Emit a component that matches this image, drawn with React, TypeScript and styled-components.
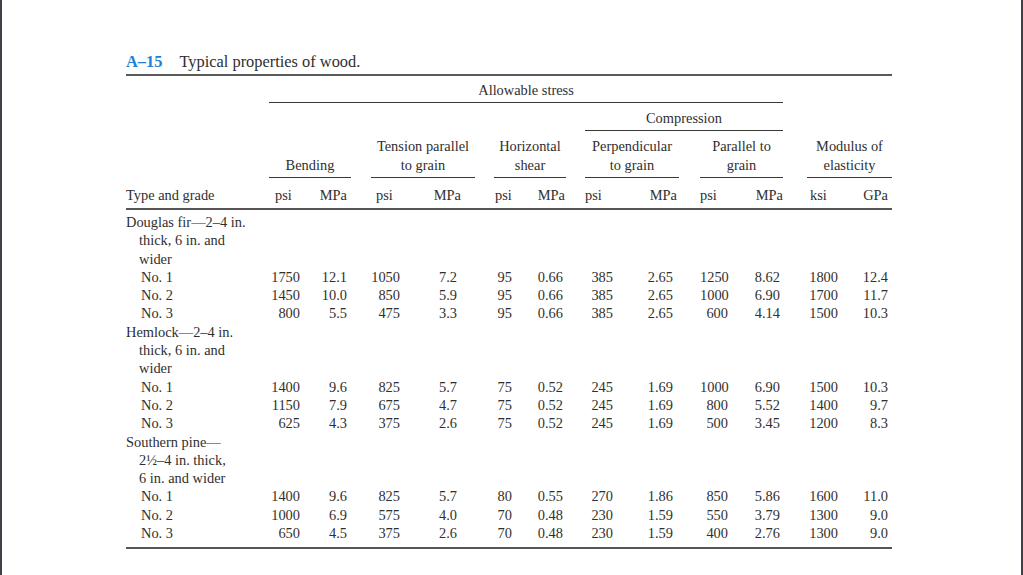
import React from "react";
import styled, { createGlobalStyle } from "styled-components";

const COLS = [143, 41, 41, 20, 52, 52, 19, 36, 36, 19, 47, 47, 21, 41, 42, 24, 42, 43];
const TEMPLATE = COLS.map((c) => `${c}px`).join(" ");

const Global = createGlobalStyle`
  html, body { margin: 0; padding: 0; background: #ffffff; }
  body {
    font-family: "Liberation Serif", "Times New Roman", serif;
    color: #2f2f2f;
    -webkit-font-smoothing: antialiased;
  }
`;

const Page = styled.div`
  box-sizing: border-box;
  width: 1023px;
  height: 575px;
  overflow: hidden;
  background: #ffffff;
  border-left: 2px solid #3d4248;
  border-right: 2px solid #3d4248;
  padding: 52px 0 0 124px;
`;

const Sheet = styled.div`
  width: 766px;
  font-size: 14.4px;
`;

const Caption = styled.div`
  display: flex;
  align-items: baseline;
  gap: 17px;
  font-size: 16.4px;
  line-height: 20px;
  padding-bottom: 2px;
  border-bottom: 2px solid #5a5a5a;
`;

const CaptionNumber = styled.span`
  font-weight: 700;
  color: #1f7fd4;
`;

const CaptionText = styled.span`
  color: #2f2f2f;
`;

const Row = styled.div<{ $pt?: number; $pb?: number; $rule?: boolean; $lh?: number }>`
  display: grid;
  grid-template-columns: ${TEMPLATE};
  padding-top: ${(p) => p.$pt ?? 0}px;
  padding-bottom: ${(p) => p.$pb ?? 0}px;
  line-height: ${(p) => p.$lh ?? 18}px;
  border-bottom: ${(p) => (p.$rule ? "2px solid #555555" : "none")};
`;

const HeadCell = styled.div<{ $start: number; $end: number; $pb: number }>`
  grid-column: ${(p) => p.$start} / ${(p) => p.$end};
  display: flex;
  flex-direction: column;
  justify-content: flex-end;
  align-items: center;
  text-align: center;
  padding-bottom: ${(p) => p.$pb}px;
  border-bottom: 1px solid #3a3a3a;
  white-space: nowrap;
`;

const UnitCell = styled.div<{ $col: number; $align: "left" | "right"; $pad: number }>`
  grid-column: ${(p) => p.$col};
  text-align: ${(p) => p.$align};
  ${(p) => (p.$align === "left" ? `padding-left: ${p.$pad}px;` : `padding-right: ${p.$pad}px;`)}
  white-space: nowrap;
`;

const LabelCell = styled.div<{ $indent?: number }>`
  grid-column: 1;
  padding-left: ${(p) => p.$indent ?? 0}px;
  white-space: nowrap;
`;

const SpeciesCell = styled.div`
  grid-column: 1 / -1;
  display: flex;
  flex-direction: column;
  white-space: nowrap;
`;

const SpeciesLine = styled.span<{ $cont?: boolean }>`
  padding-left: ${(p) => (p.$cont ? 13 : 0)}px;
`;

const NumCell = styled.div<{ $col: number; $pad: number }>`
  grid-column: ${(p) => p.$col};
  text-align: right;
  padding-right: ${(p) => p.$pad}px;
  white-space: nowrap;
`;

const Body = styled.div`
  padding-top: 3px;
  padding-bottom: 5px;
  border-bottom: 2px solid #555555;
`;

const groups = [
  { start: 2, lines: ["Bending"] },
  { start: 5, lines: ["Tension parallel", "to grain"] },
  { start: 8, lines: ["Horizontal", "shear"] },
  { start: 11, lines: ["Perpendicular", "to grain"] },
  { start: 14, lines: ["Parallel to", "grain"] },
  { start: 17, lines: ["Modulus of", "elasticity"] },
];

const units: [string, string, number, number][] = [
  ["psi", "MPa", 6, 4],
  ["psi", "MPa", 5, 14],
  ["psi", "MPa", 1, 1],
  ["psi", "MPa", 0, 2],
  ["psi", "MPa", 0, 0],
  ["ksi", "GPa", 3, 4],
];

const DATA_COLS = [2, 3, 5, 6, 8, 9, 11, 12, 14, 15, 17, 18];
const DATA_PADS = [10, 4, 23, 18, 18, 3, 19, 6, 13, 3, 11, 4];

const species = [
  {
    lines: ["Douglas fir\u20142\u20134 in.", "thick, 6 in. and", "wider"],
    grades: [
      ["1750", "12.1", "1050", "7.2", "95", "0.66", "385", "2.65", "1250", "8.62", "1800", "12.4"],
      ["1450", "10.0", "850", "5.9", "95", "0.66", "385", "2.65", "1000", "6.90", "1700", "11.7"],
      ["800", "5.5", "475", "3.3", "95", "0.66", "385", "2.65", "600", "4.14", "1500", "10.3"],
    ],
  },
  {
    lines: ["Hemlock\u20142\u20134 in.", "thick, 6 in. and", "wider"],
    grades: [
      ["1400", "9.6", "825", "5.7", "75", "0.52", "245", "1.69", "1000", "6.90", "1500", "10.3"],
      ["1150", "7.9", "675", "4.7", "75", "0.52", "245", "1.69", "800", "5.52", "1400", "9.7"],
      ["625", "4.3", "375", "2.6", "75", "0.52", "245", "1.69", "500", "3.45", "1200", "8.3"],
    ],
  },
  {
    lines: ["Southern pine\u2014", "2\u00bd\u20134 in. thick,", "6 in. and wider"],
    grades: [
      ["1400", "9.6", "825", "5.7", "80", "0.55", "270", "1.86", "850", "5.86", "1600", "11.0"],
      ["1000", "6.9", "575", "4.0", "70", "0.48", "230", "1.59", "550", "3.79", "1300", "9.0"],
      ["650", "4.5", "375", "2.6", "70", "0.48", "230", "1.59", "400", "2.76", "1300", "9.0"],
    ],
  },
];

export default function App() {
  return (
    <>
      <Global />
      <Page>
        <Sheet>
          <Caption>
            <CaptionNumber>A–15</CaptionNumber>
            <CaptionText>Typical properties of wood.</CaptionText>
          </Caption>

          <Row $pt={5}>
            <HeadCell $start={2} $end={16} $pb={3}>
              Allowable stress
            </HeadCell>
          </Row>

          <Row $pt={6}>
            <HeadCell $start={11} $end={16} $pb={3}>
              Compression
            </HeadCell>
          </Row>

          <Row $pt={6} $lh={19}>
            {groups.map((g) => (
              <HeadCell key={g.start} $start={g.start} $end={g.start + 2} $pb={2}>
                {g.lines.map((l) => (
                  <span key={l}>{l}</span>
                ))}
              </HeadCell>
            ))}
          </Row>

          <Row $pt={8} $pb={4} $rule>
            <LabelCell>Type and grade</LabelCell>
            {units.map(([a, b, pl, pr], i) => (
              <React.Fragment key={i}>
                <UnitCell $col={groups[i].start} $align="left" $pad={pl}>
                  {a}
                </UnitCell>
                <UnitCell $col={groups[i].start + 1} $align="right" $pad={pr}>
                  {b}
                </UnitCell>
              </React.Fragment>
            ))}
          </Row>

          <Body>
            {species.map((s) => (
              <React.Fragment key={s.lines[0]}>
                <Row $lh={18.3}>
                  <SpeciesCell>
                    {s.lines.map((l, i) => (
                      <SpeciesLine key={l} $cont={i > 0}>
                        {l}
                      </SpeciesLine>
                    ))}
                  </SpeciesCell>
                </Row>
                {s.grades.map((vals, gi) => (
                  <Row key={gi} $lh={18.3}>
                    <LabelCell $indent={15}>No. {gi + 1}</LabelCell>
                    {vals.map((v, vi) => (
                      <NumCell key={vi} $col={DATA_COLS[vi]} $pad={DATA_PADS[vi]}>
                        {v}
                      </NumCell>
                    ))}
                  </Row>
                ))}
              </React.Fragment>
            ))}
          </Body>
        </Sheet>
      </Page>
    </>
  );
}
